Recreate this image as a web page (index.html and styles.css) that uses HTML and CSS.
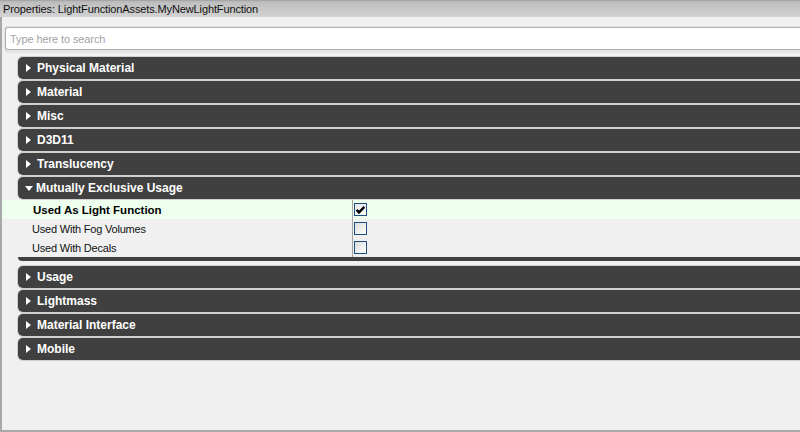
FILE: index.html
```html
<!DOCTYPE html>
<html>
<head>
<meta charset="utf-8">
<link rel="stylesheet" href="styles.css">
</head>
<body>
<div class="window">
  <div class="titlebar">Properties: LightFunctionAssets.MyNewLightFunction</div>
  <div class="content">
    <div class="search"><span class="placeholder">Type here to search</span></div>
    <div class="cats">
      <div class="cat"><div class="cat-head"><span class="tri-right"></span>Physical Material</div></div>
      <div class="cat"><div class="cat-head"><span class="tri-right"></span>Material</div></div>
      <div class="cat"><div class="cat-head"><span class="tri-right"></span>Misc</div></div>
      <div class="cat"><div class="cat-head"><span class="tri-right"></span>D3D11</div></div>
      <div class="cat"><div class="cat-head"><span class="tri-right"></span>Translucency</div></div>
      <div class="cat open">
        <div class="cat-head"><span class="tri-down"></span>Mutually Exclusive Usage</div>
        <div class="rows">
          <div class="row selected">
            <div class="name">Used As Light Function</div>
            <div class="value"><span class="check checked"><svg width="9" height="8" viewBox="0 0 9 8"><path d="M0.6 3.8 L3 6.4 L8.4 0.9" fill="none" stroke="#000" stroke-width="2.4"/></svg></span></div>
          </div>
          <div class="row">
            <div class="name">Used With Fog Volumes</div>
            <div class="value"><span class="check"></span></div>
          </div>
          <div class="row">
            <div class="name">Used With Decals</div>
            <div class="value"><span class="check"></span></div>
          </div>
        </div>
        <div class="cat-foot"></div>
      </div>
      <div class="cat"><div class="cat-head"><span class="tri-right"></span>Usage</div></div>
      <div class="cat"><div class="cat-head"><span class="tri-right"></span>Lightmass</div></div>
      <div class="cat"><div class="cat-head"><span class="tri-right"></span>Material Interface</div></div>
      <div class="cat"><div class="cat-head"><span class="tri-right"></span>Mobile</div></div>
    </div>
  </div>
</div>
</body>
</html>
```

FILE: styles.css
```css
html, body {
  margin: 0;
  padding: 0;
  background: #f0f0f0;
}
body {
  font-family: "Liberation Sans", Arial, sans-serif;
  font-size: 11px;
}
.window {
  width: 800px;
  height: 432px;
  box-sizing: border-box;
  display: flex;
  flex-direction: column;
  overflow: hidden;
}
.titlebar {
  height: 17px;
  box-sizing: border-box;
  padding-left: 3px;
  padding-top: 1px;
  color: #111;
  background: linear-gradient(#b6b6b6, #c0c0c0 2px, #d2d2d2);
  border-top: 1px solid #a6a6a6;
  line-height: 14px;
  letter-spacing: -0.12px;
  white-space: nowrap;
}
.content {
  flex: 1;
  border-left: 2px solid #a8a8a8;
  border-bottom: 2px solid #a8a8a8;
  background: #f0f0f0;
  padding-top: 10px;
  display: flex;
  flex-direction: column;
}
.search {
  margin-left: 3px;
  height: 23px;
  box-sizing: border-box;
  background: #fff;
  border: 1px solid #a9b0b6;
  border-right: none;
  border-radius: 3px 0 0 3px;
  box-shadow: 0 0 0 1px #e2e4e4, 0 2px 0 1px #e4e6e6;
  padding-left: 4px;
  display: flex;
  align-items: center;
}
.placeholder {
  color: #a3a3a3;
  letter-spacing: -0.1px;
}
.cats {
  margin-top: 7px;
  display: flex;
  flex-direction: column;
  gap: 2px;
}
.cat-head {
  margin-left: 16px;
  height: 22px;
  box-sizing: border-box;
  background: #404040;
  border-radius: 5px 0 0 5px;
  box-shadow: 0 0 0 1px #cfcfcf;
  color: #fff;
  font-weight: bold;
  font-size: 12px;
  display: flex;
  align-items: center;
  padding-left: 8px;
  white-space: nowrap;
}
.tri-right {
  width: 0;
  height: 0;
  border-top: 4.5px solid transparent;
  border-bottom: 4.5px solid transparent;
  border-left: 5px solid #fff;
  margin-right: 6px;
}
.tri-down {
  width: 0;
  height: 0;
  border-left: 4.5px solid transparent;
  border-right: 4.5px solid transparent;
  border-top: 5px solid #fff;
  margin-right: 3px;
  margin-left: -1px;
}
.rows {
  padding-top: 1px;
}
.row {
  height: 19px;
  display: flex;
  color: #111;
  letter-spacing: -0.2px;
}
.row.selected {
  background: #efffee;
  font-weight: bold;
  font-size: 11.5px;
  letter-spacing: 0;
  color: #000;
}
.name {
  width: 351px;
  box-sizing: border-box;
  padding-left: 30px;
  border-right: 1px solid #a4a4a4;
  display: flex;
  align-items: center;
  white-space: nowrap;
}
.row.selected .name {
  padding-left: 31px;
}
.value {
  flex: 1;
  display: flex;
  align-items: center;
  padding-left: 1px;
}
.check {
  width: 13px;
  height: 13px;
  box-sizing: border-box;
  border: 1px solid #1d5080;
  background: linear-gradient(135deg, #dcdcdc, #ffffff);
  display: flex;
  align-items: center;
  justify-content: center;
}
.check.checked {
  background: linear-gradient(135deg, #e6e6e6, #ffffff);
}
.cat-foot {
  margin-left: 16px;
  height: 4px;
  background: #404040;
  border-radius: 0 0 0 5px;
  margin-bottom: 3px;
}
```
